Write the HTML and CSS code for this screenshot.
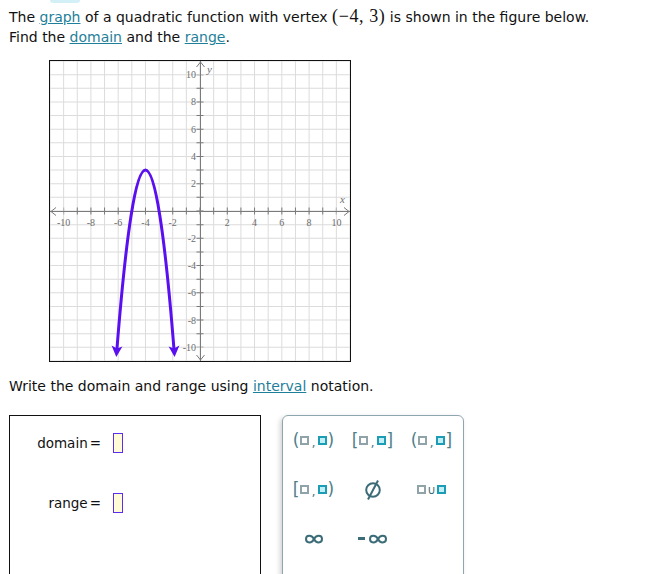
FILE: index.html
```html
<!DOCTYPE html>
<html>
<head>
<meta charset="utf-8">
<link rel="stylesheet" href="styles.css">
</head>
<body>
<div class="tab"></div>
<p class="prompt">The <a class="lnk">graph</a> of a quadratic function with vertex <span class="math">(−4, 3)</span> is shown in the figure below.<br>Find the <a class="lnk">domain</a> and the <a class="lnk">range</a>.</p>

<div class="graph">
<svg width="300" height="300" viewBox="0 0 300 300" xmlns="http://www.w3.org/2000/svg">
  <line x1="0" y1="150" x2="300" y2="150" stroke="#dcdcdc" stroke-width="300" stroke-dasharray="1 12.6364" stroke-dashoffset="0.5"/>
  <line x1="150" y1="0" x2="150" y2="300" stroke="#dcdcdc" stroke-width="300" stroke-dasharray="1 12.6364" stroke-dashoffset="0.5"/>
  <line x1="13.64" y1="150" x2="286.36" y2="150" stroke="#7a7a7a" stroke-width="7" stroke-dasharray="1 12.6364" stroke-dashoffset="0.5"/>
  <line x1="150" y1="13.64" x2="150" y2="286.36" stroke="#7a7a7a" stroke-width="7" stroke-dasharray="1 12.6364" stroke-dashoffset="0.5"/>
  <line x1="0" y1="150.5" x2="300" y2="150.5" stroke="#7a7a7a" stroke-width="1"/>
  <line x1="150.5" y1="0" x2="150.5" y2="300" stroke="#7a7a7a" stroke-width="1"/>
  <path d="M294 146.5 L299 150.5 L294 154.5 M6 146.5 L1 150.5 L6 154.5 M146.5 6 L150.5 1 L154.5 6 M146.5 294 L150.5 299 L154.5 294" fill="none" stroke="#7a7a7a" stroke-width="1"/>
  <g class="lbl" text-anchor="middle">
    <text x="13.6" y="165">-10</text>
    <text x="40.9" y="165">-8</text>
    <text x="68.2" y="165">-6</text>
    <text x="95.5" y="165">-4</text>
    <text x="122.7" y="165">-2</text>
    <text x="177.3" y="165">2</text>
    <text x="204.5" y="165">4</text>
    <text x="231.8" y="165">6</text>
    <text x="259.1" y="165">8</text>
    <text x="286.4" y="165">10</text>
  </g>
  <g class="lbl" text-anchor="end">
    <text x="146" y="17.1">10</text>
    <text x="146" y="44.4">8</text>
    <text x="146" y="71.7">6</text>
    <text x="146" y="98.9">4</text>
    <text x="146" y="126.2">2</text>
    <text x="146" y="180.8">-2</text>
    <text x="146" y="208.1">-4</text>
    <text x="146" y="235.3">-6</text>
    <text x="146" y="262.6">-8</text>
    <text x="146" y="289.9">-10</text>
  </g>
  <text class="var" x="290" y="142">x</text>
  <text class="var" x="157" y="12">y</text>
  <path d="M66.82 289.5 Q95.45 -71.3 124.09 289.5" fill="none" stroke="#5a0ff0" stroke-width="3"/>
  <path d="M66.3 296 L61.6 284.6 L67 287.5 L72.4 285.4 Z" fill="#5a0ff0"/>
  <path d="M124.6 296 L118.6 285.4 L124 287.5 L129.4 284.6 Z" fill="#5a0ff0"/>
</svg>
</div>

<p class="instr">Write the domain and range using <a class="lnk">interval</a> notation.</p>

<div class="work">
  <div class="answers">
    <div class="row"><span class="label">domain<span class="eq">=</span></span><span class="inp"></span></div>
    <div class="row"><span class="label">range<span class="eq">=</span></span><span class="inp"></span></div>
  </div>
  <div class="palette">
    <div class="keys">
      <div class="key"><span class="br">(</span><span class="bx e"></span><span class="cm">,</span><span class="bx f"></span><span class="br">)</span></div>
      <div class="key"><span class="br">[</span><span class="bx e"></span><span class="cm">,</span><span class="bx f"></span><span class="br">]</span></div>
      <div class="key"><span class="br">(</span><span class="bx e"></span><span class="cm">,</span><span class="bx f"></span><span class="br">]</span></div>
      <div class="key"><span class="br">[</span><span class="bx e"></span><span class="cm">,</span><span class="bx f"></span><span class="br">)</span></div>
      <div class="key">
        <svg width="20" height="22" viewBox="0 0 20 22"><circle cx="10" cy="11" r="6.8" fill="none" stroke="#3c6c78" stroke-width="2"/><line x1="15" y1="1.5" x2="5" y2="20.5" stroke="#3c6c78" stroke-width="2"/></svg>
      </div>
      <div class="key"><span class="bx e sm"></span><span class="cup">∪</span><span class="bx f sm"></span></div>
      <div class="key"><svg class="inf" width="20" height="12" viewBox="0 0 20 12"><path d="M10 6 C8 1.5 2 1.5 2 6 C2 10.5 8 10.5 10 6 C12 1.5 18 1.5 18 6 C18 10.5 12 10.5 10 6 Z" fill="none" stroke="#3c6c78" stroke-width="2"/></svg></div>
      <div class="key"><span class="minus"></span><svg class="inf" width="20" height="12" viewBox="0 0 20 12"><path d="M10 6 C8 1.5 2 1.5 2 6 C2 10.5 8 10.5 10 6 C12 1.5 18 1.5 18 6 C18 10.5 12 10.5 10 6 Z" fill="none" stroke="#3c6c78" stroke-width="2"/></svg></div>
    </div>
    <div class="bar"></div>
  </div>
</div>
</body>
</html>
```
FILE: styles.css
```css
html, body {
  margin: 0;
  padding: 0;
  background: #fff;
}
body {
  font-family: "DejaVu Sans", Verdana, sans-serif;
  font-size: 14px;
  color: #111;
  overflow: hidden;
}
.tab {
  width: 30px;
  height: 3px;
  margin-left: 50px;
  background: #d3f0f6;
  border-radius: 0 0 6px 6px;
}
.prompt {
  margin: 4px 0 0 9px;
  line-height: 20px;
}
.lnk {
  color: #1f7f9a;
  text-decoration: underline;
}
.math {
  font-family: "Liberation Serif", "DejaVu Serif", serif;
  font-size: 18px;
  letter-spacing: 0.6px;
  line-height: 0;
}
.graph {
  margin: 13px 0 0 49px;
  width: 300px;
  height: 300px;
  border: 1px solid #111;
}
.graph svg {
  display: block;
}
.lbl text {
  font-family: "Liberation Serif", serif;
  font-size: 10px;
  fill: #6e6e6e;
}
.var {
  font-family: "Liberation Serif", serif;
  font-style: italic;
  font-size: 11px;
  fill: #6e6e6e;
}
.instr {
  margin: 14px 0 0 9px;
  font-size: 14px;
  line-height: 20px;
}
.work {
  display: flex;
  gap: 21px;
  margin: 19px 0 0 9px;
}
.answers {
  width: 252px;
  height: 200px;
  border: 1px solid #111;
  padding-top: 17px;
  box-sizing: border-box;
  display: flex;
  flex-direction: column;
  gap: 40px;
  font-size: 13.5px;
}
.row {
  display: flex;
  align-items: center;
  height: 20px;
}
.label {
  width: 91px;
  text-align: right;
}
.eq {
  margin-left: 2px;
}
.inp {
  display: inline-block;
  width: 10px;
  height: 20px;
  margin-left: 12px;
  box-sizing: border-box;
  background: #fffbd6;
  border: 1.5px solid #5e2cf0;
}
.palette {
  width: 182px;
  height: 200px;
  box-sizing: border-box;
  border: 1px solid #8ea6ad;
  border-radius: 6px;
  box-shadow: -2px 2px 5px rgba(0, 0, 0, 0.18);
}
.keys {
  display: grid;
  grid-template-columns: 59px 59px 59px;
  grid-auto-rows: 49px;
  padding-left: 1px;
}
.key {
  display: flex;
  align-items: center;
  justify-content: center;
  color: #3c6c78;
}
.br {
  font-family: "DejaVu Sans", sans-serif;
  font-size: 17px;
  color: #4f7e89;
  line-height: 1;
}
.cm {
  font-size: 13px;
  color: #4f7e89;
  margin: 4px 1px 0 1px;
}
.bx {
  display: inline-block;
  width: 9px;
  height: 9px;
  box-sizing: border-box;
  margin: 0 1px;
}
.bx.e {
  border: 2px solid #8fa3a9;
  background: #fff;
}
.bx.f {
  border: 2px solid #1d9cb6;
  background: #c2eff6;
}
.bx.sm {
  margin: 0;
}
.cup {
  font-size: 12px;
  color: #3c6c78;
  margin: 0 1px;
  line-height: 1;
}
.inf {
  display: block;
}
.minus {
  display: inline-block;
  width: 7px;
  height: 2.5px;
  background: #3c6c78;
  margin-right: 3px;
}
.bar {
  margin: 17px 4px 0 4px;
  height: 20px;
  background: #e1e7e9;
  border-radius: 4px 4px 0 0;
}
```
